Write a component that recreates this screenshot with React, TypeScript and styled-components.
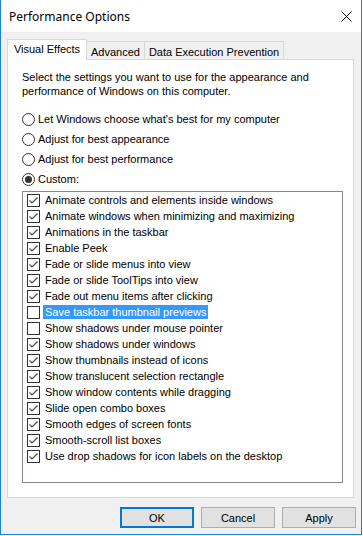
import React from 'react';
import styled, { createGlobalStyle } from 'styled-components';

const GlobalStyle = createGlobalStyle`
  html, body {
    margin: 0;
    padding: 0;
    background: #ffffff;
  }
  * {
    box-sizing: border-box;
  }
`;

// Outer window frame
const Window = styled.div`
  width: 362px;
  height: 535px;
  border: 1px solid #1883d7;
  border-top: none;
  background: #f0f0f0;
  display: flex;
  flex-direction: column;
  font-family: 'Liberation Sans', Arial, sans-serif;
  font-size: 11px;
  color: #000;
`;

const TitleBar = styled.div`
  height: 32px;
  background: #fff;
  display: flex;
  align-items: center;
  justify-content: space-between;
  padding: 0 8px 0 8px;
`;

const Title = styled.span`
  font-family: 'Noto Sans', 'Open Sans', sans-serif;
  font-size: 12px;
  color: #000;
`;

const CloseButton = styled.div`
  width: 30px;
  height: 30px;
  display: flex;
  align-items: center;
  justify-content: center;
  margin-right: -8px;
`;

const Body = styled.div`
  flex: 1;
  display: flex;
  flex-direction: column;
  padding: 7px 6px 0 6px;
`;

const TabRow = styled.div`
  height: 21px;
  display: flex;
  align-items: flex-end;
`;

const Tab = styled.div<{ active?: boolean; w: number }>`
  width: ${(p) => p.w}px;
  height: ${(p) => (p.active ? 21 : 19)}px;
  margin-left: ${(p) => (p.active ? 0 : -1)}px;
  border: 1px solid #d9d9d9;
  border-bottom: none;
  background: ${(p) => (p.active ? '#fff' : '#f0f0f0')};
  position: relative;
  z-index: ${(p) => (p.active ? 2 : 0)};
  display: flex;
  align-items: center;
  justify-content: center;
  padding-top: ${(p) => (p.active ? 0 : 1)}px;
  padding-bottom: ${(p) => (p.active ? 2 : 0)}px;
  white-space: nowrap;
`;

const Panel = styled.div`
  position: relative;
  z-index: 1;
  margin-top: -1px;
  width: 347px;
  height: 439px;
  border: 1px solid #d9d9d9;
  background: #fff;
  padding: 10px 10px 0 14px;
  display: flex;
  flex-direction: column;
`;

const Intro = styled.p`
  margin: 0;
  line-height: 14px;
  width: 320px;
`;

const RadioGroup = styled.div`
  margin-top: 11px;
  display: flex;
  flex-direction: column;
`;

const RadioRow = styled.label`
  height: 20px;
  display: flex;
  align-items: center;
  gap: 3px;
`;

const RadioCircle = styled.span<{ checked?: boolean }>`
  width: 13px;
  height: 13px;
  border-radius: 50%;
  border: 1px solid #333;
  background: #fff;
  display: flex;
  align-items: center;
  justify-content: center;

  &::after {
    content: '';
    display: ${(p) => (p.checked ? 'block' : 'none')};
    width: 7px;
    height: 7px;
    border-radius: 50%;
    background: #333;
  }
`;

const ListBox = styled.div`
  margin-top: 2px;
  width: 321px;
  height: 292px;
  border: 1px solid #828790;
  background: #fff;
  display: flex;
  flex-direction: column;
`;

const ListItem = styled.div`
  height: 16px;
  display: flex;
  align-items: center;
  padding-left: 4px;
`;

const CheckBox = styled.span`
  width: 13px;
  height: 13px;
  border: 1px solid #333;
  background: #fff;
  display: flex;
  align-items: center;
  justify-content: center;
  flex-shrink: 0;
`;

const ItemLabel = styled.span<{ selected?: boolean }>`
  margin-left: 3px;
  padding: 0 1px;
  height: 14px;
  line-height: 12px;
  white-space: nowrap;
  background: ${(p) => (p.selected ? '#3399ff' : 'transparent')};
  color: ${(p) => (p.selected ? '#fff' : '#000')};
  border: 1px dotted ${(p) => (p.selected ? '#c47a22' : 'transparent')};
`;

const ButtonRow = styled.div`
  margin-top: 9px;
  display: flex;
  justify-content: flex-end;
  gap: 7px;
  padding-right: 0;
  margin-right: -1px;
`;

const Button = styled.div<{ primary?: boolean }>`
  width: 74px;
  height: 21px;
  background: #e1e1e1;
  border: ${(p) => (p.primary ? '2px solid #0078d7' : '1px solid #adadad')};
  display: flex;
  align-items: center;
  justify-content: center;
`;

const Check = () => (
  <svg width="11" height="11" viewBox="0 0 11 11">
    <polyline points="1.5,5.5 4,8 9.5,2.5" fill="none" stroke="#4d4d4d" strokeWidth="1.2" />
  </svg>
);

const items: { label: string; checked: boolean; selected?: boolean }[] = [
  { label: 'Animate controls and elements inside windows', checked: true },
  { label: 'Animate windows when minimizing and maximizing', checked: true },
  { label: 'Animations in the taskbar', checked: true },
  { label: 'Enable Peek', checked: true },
  { label: 'Fade or slide menus into view', checked: true },
  { label: 'Fade or slide ToolTips into view', checked: true },
  { label: 'Fade out menu items after clicking', checked: true },
  { label: 'Save taskbar thumbnail previews', checked: false, selected: true },
  { label: 'Show shadows under mouse pointer', checked: false },
  { label: 'Show shadows under windows', checked: true },
  { label: 'Show thumbnails instead of icons', checked: true },
  { label: 'Show translucent selection rectangle', checked: true },
  { label: 'Show window contents while dragging', checked: true },
  { label: 'Slide open combo boxes', checked: true },
  { label: 'Smooth edges of screen fonts', checked: true },
  { label: 'Smooth-scroll list boxes', checked: true },
  { label: 'Use drop shadows for icon labels on the desktop', checked: true },
];

const radios = [
  { label: "Let Windows choose what's best for my computer", checked: false },
  { label: 'Adjust for best appearance', checked: false },
  { label: 'Adjust for best performance', checked: false },
  { label: 'Custom:', checked: true },
];

const App: React.FC = () => {
  return (
    <>
      <GlobalStyle />
      <Window>
        <TitleBar>
          <Title>Performance Options</Title>
          <CloseButton>
            <svg width="11" height="11" viewBox="0 0 11 11">
              <path d="M0.5 0.5 L10.5 10.5 M10.5 0.5 L0.5 10.5" stroke="#000" strokeWidth="1" />
            </svg>
          </CloseButton>
        </TitleBar>
        <Body>
          <TabRow>
            <Tab active w={80}>Visual Effects</Tab>
            <Tab w={59}>Advanced</Tab>
            <Tab w={140}>Data Execution Prevention</Tab>
          </TabRow>
          <Panel>
            <Intro>
              Select the settings you want to use for the appearance and performance of Windows on this computer.
            </Intro>
            <RadioGroup>
              {radios.map((r) => (
                <RadioRow key={r.label}>
                  <RadioCircle checked={r.checked} />
                  {r.label}
                </RadioRow>
              ))}
            </RadioGroup>
            <ListBox>
              {items.map((it) => (
                <ListItem key={it.label}>
                  <CheckBox>{it.checked && <Check />}</CheckBox>
                  <ItemLabel selected={it.selected}>{it.label}</ItemLabel>
                </ListItem>
              ))}
            </ListBox>
          </Panel>
          <ButtonRow>
            <Button primary>OK</Button>
            <Button>Cancel</Button>
            <Button>Apply</Button>
          </ButtonRow>
        </Body>
      </Window>
    </>
  );
};

export default App;
